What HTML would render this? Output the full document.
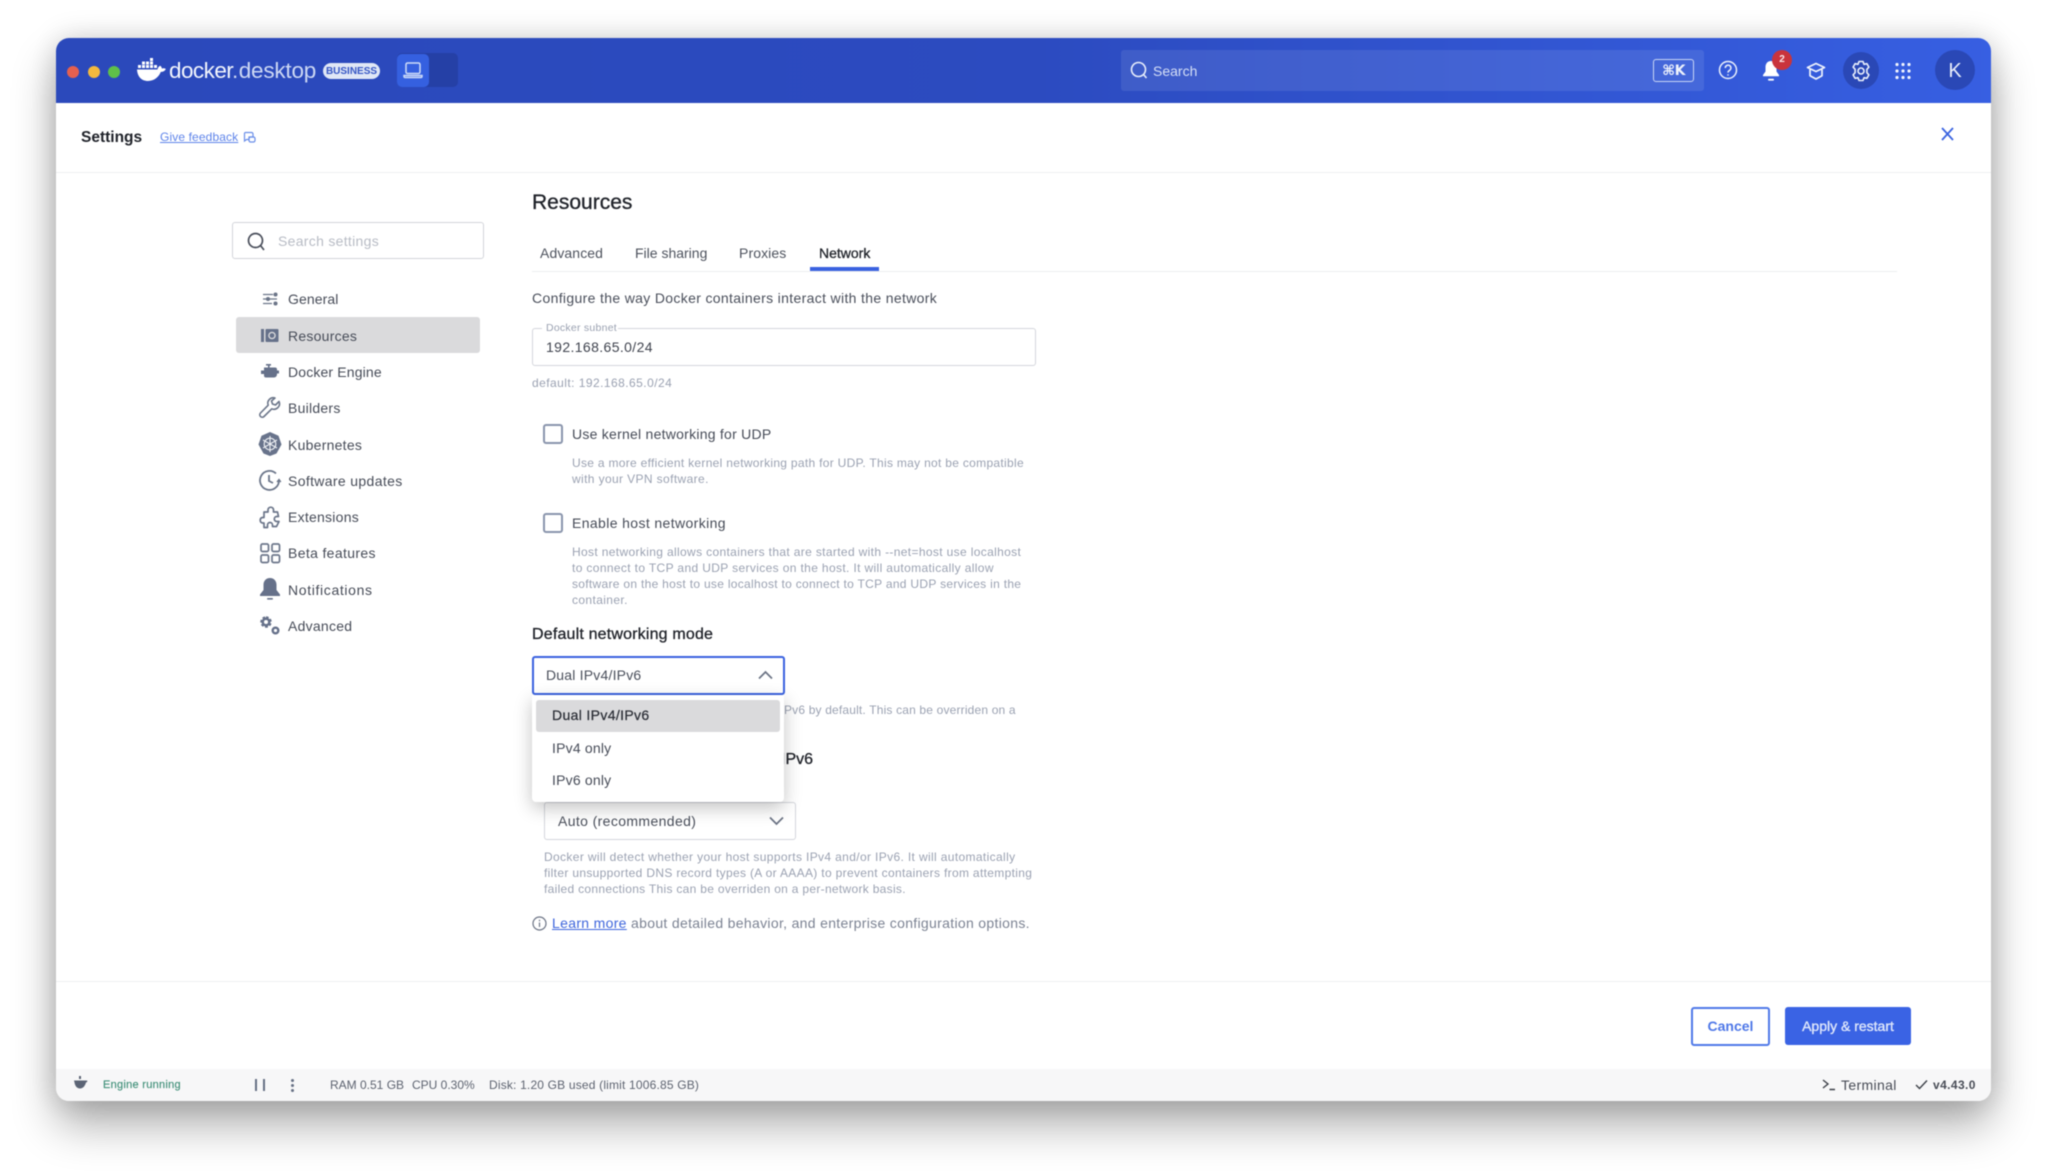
<!DOCTYPE html>
<html lang="en"><head><meta charset="utf-8"><title>Docker Desktop Settings</title>
<style>
html,body{margin:0;padding:0;width:2048px;height:1176px;background:#fff;overflow:hidden}
body{font-family:"Liberation Sans",sans-serif;color:#3c4250}
#win{position:absolute;left:56px;top:38px;width:1935px;height:1063px;background:#fff;border-radius:13px;box-shadow:0 24px 44px rgba(0,0,0,.32),0 0 30px rgba(0,0,0,.16)}
#root{position:absolute;left:0;top:0;width:2048px;height:1176px;filter:blur(.55px)}
.a{position:absolute}
.t{position:absolute;white-space:nowrap;line-height:20px;height:20px;margin-top:-10px}
.d{color:#9ba2b2;font-size:12px;letter-spacing:.38px;margin-top:-9.300px}
.n{font-size:14px;color:#474c58;left:288px;letter-spacing:.25px}
svg{position:absolute;overflow:visible}
</style></head><body>
<div id="root">
<div id="win"></div>
<div class="a" style="left:56px;top:38px;width:1935px;height:65px;border-radius:13px 13px 0 0;background:linear-gradient(90deg,#2b49bb 0%,#2c4bc0 50%,#375fe2 100%)"></div>

<div class="a" style="left:67px;top:66px;width:12px;height:12px;border-radius:50%;background:#e5604f"></div>
<div class="a" style="left:87.500px;top:66px;width:12px;height:12px;border-radius:50%;background:#f2b93e"></div>
<div class="a" style="left:108px;top:66px;width:12px;height:12px;border-radius:50%;background:#5fc04a"></div>

<svg style="left:137px;top:58px" width="29" height="23" viewBox="0 0 29 23" fill="#fff"><path d="M0 11.500h20.500c.3-1.800 1.300-3.200 2.800-3.700 1 .8 1.500 1.800 1.600 2.800 1.300-.5 2.700-.4 3.900.4-.9 2-2.800 2.900-5 2.900C21.800 19 17 23 11 23 4.500 23 .4 18.500 0 11.500z"/><rect x="1" y="7" width="3" height="3"/><rect x="5" y="7" width="3" height="3"/><rect x="9" y="7" width="3" height="3"/><rect x="13" y="7" width="3" height="3"/><rect x="17" y="7" width="3" height="3"/><rect x="5" y="3.500" width="3" height="3"/><rect x="9" y="3.500" width="3" height="3"/><rect x="13" y="3.500" width="3" height="3"/><rect x="13" y="0" width="3" height="3"/></svg>
<div class="t" style="left:169px;top:71px;font-size:22.500px;color:#f3f6fd;letter-spacing:-.55px;line-height:20px">docker<span style="color:#cfd9f5">.</span><span style="color:#cdd8f4;letter-spacing:-.2px;margin-left:1px">desktop</span></div>
<div class="a" style="left:323px;top:63px;width:57px;height:16px;border-radius:8px;background:#e0e7f6"></div>
<div class="t" style="left:323px;width:57px;text-align:center;top:71.500px;font-size:10px;font-weight:bold;color:#3556c4">BUSINESS</div>
<div class="a" style="left:397px;top:53px;width:61px;height:34px;border-radius:5px;background:#2540a6"></div>
<div class="a" style="left:397px;top:54px;width:32px;height:33px;border-radius:5px;background:#3560e0"></div>
<svg style="left:403px;top:61px" width="20" height="18" viewBox="0 0 20 18" fill="none" stroke="#cfdcf8" stroke-width="1.500"><rect x="3" y="2" width="14" height="10.500" rx="1.500"/><path d="M1 14.500h18v.8a1.200 1.200 0 0 1-1.200 1.200H2.200A1.200 1.200 0 0 1 1 15.300z"/></svg>

<div class="a" style="left:1121px;top:50px;width:583px;height:41px;border-radius:3px;background:rgba(255,255,255,.09)"></div>
<svg style="left:1130px;top:61px" width="18" height="19" viewBox="0 0 18 19" fill="none" stroke="#e8eefb" stroke-width="1.600"><circle cx="8.500" cy="8.500" r="7"/><path d="M13.500 13.500L16.500 17"/></svg>
<div class="t" style="left:1153px;top:70.500px;font-size:14px;color:#d5dff6">Search</div>
<div class="a" style="left:1653px;top:59px;width:39px;height:21px;border:1.500px solid #c9d6f5;border-radius:3px"></div>
<div class="t" style="left:1653px;width:41px;text-align:center;top:70.500px;font-size:14px;font-weight:bold;color:#eef2fc;font-family:'DejaVu Sans',sans-serif;letter-spacing:-.5px">⌘K</div>

<svg style="left:1718px;top:60px" width="20" height="20" viewBox="0 0 20 20" fill="none" stroke="#eaf0fc" stroke-width="1.500"><circle cx="10" cy="10" r="8.500"/><path d="M7.300 8a2.800 2.800 0 1 1 4.300 2.300c-1 .6-1.600 1.200-1.600 2.300"/><path d="M10 14.300v1.300"/></svg>
<svg style="left:1762px;top:60px" width="18" height="22" viewBox="0 0 18 22" fill="#fff"><path d="M9 1c3.500 0 5.500 2.800 5.500 6v4.500l2.500 3.500v1.300H1V15l2.500-3.500V7C3.500 3.800 5.500 1 9 1z"/><rect x="6" y="18.800" width="6" height="1.800" rx=".9"/></svg>
<div class="a" style="left:1772px;top:50px;width:20px;height:20px;border-radius:50%;background:#c9343c"></div>
<div class="t" style="left:1772px;width:20px;text-align:center;top:60px;font-size:10px;font-weight:bold;color:#fbe9ea">2</div>
<svg style="left:1806px;top:61px" width="20" height="20" viewBox="0 0 20 20" fill="none" stroke="#f0f4fd" stroke-width="1.700" stroke-linejoin="round"><path d="M1.500 6.500L10 2.500l8.500 4-8.500 4z"/><path d="M4 8.500v6.200L10 18l6-3.300V8.500"/></svg>
<div class="a" style="left:1843px;top:52px;width:36px;height:37px;border-radius:50%;background:#2a48b6"></div>
<svg style="left:1851px;top:60px" width="20" height="22" viewBox="0 0 20 22" fill="none" stroke="#eaf0fc" stroke-width="1.600" stroke-linejoin="round"><circle cx="10" cy="11" r="3"/><path d="M8 1.500h4l1 2.800 2.900-.6 2 3.400-2 2.200v3.400l2 2.200-2 3.400-2.900-.6-1 2.800H8l-1-2.800-2.900.6-2-3.400 2-2.200V9.300l-2-2.200 2-3.400 2.900.6z"/></svg>
<svg style="left:1895px;top:62px" width="16" height="18" viewBox="0 0 16 18" fill="#f1f4fd"><circle cx="2" cy="2.500" r="1.600"/><circle cx="8" cy="2.500" r="1.600"/><circle cx="14" cy="2.500" r="1.600"/><circle cx="2" cy="9" r="1.600"/><circle cx="8" cy="9" r="1.600"/><circle cx="14" cy="9" r="1.600"/><circle cx="2" cy="15.500" r="1.600"/><circle cx="8" cy="15.500" r="1.600"/><circle cx="14" cy="15.500" r="1.600"/></svg>
<div class="a" style="left:1935px;top:50px;width:40px;height:40px;border-radius:50%;background:#2a48b6"></div>
<div class="t" style="left:1935px;width:40px;text-align:center;top:70.500px;font-size:20px;color:#e9eefb">K</div>

<div class="t" style="left:81px;top:137.500px;font-size:15.500px;font-weight:bold;color:#1f2229">Settings</div>
<div class="t" style="left:160px;top:137px;font-size:12px;color:#5e84ea;text-decoration:underline;letter-spacing:.12px">Give feedback</div>
<svg style="left:243px;top:131px" width="13" height="13" viewBox="0 0 13 13" fill="none" stroke="#6a8ee9" stroke-width="1.200"><path d="M2.500 1.500h6a1.500 1.500 0 0 1 1.500 1.500v3H6v2.500H3.500L1.500 10V2.500a1 1 0 0 1 1-1z"/><rect x="6" y="6" width="6" height="5" rx="1.500"/></svg>
<svg style="left:1941px;top:127px" width="13" height="14" viewBox="0 0 13 14" fill="none" stroke="#3a63e0" stroke-width="1.800"><path d="M1 1l11 12M12 1L1 13"/></svg>
<div class="a" style="left:56px;top:172px;width:1935px;height:1px;background:#eeeff1"></div>

<div class="a" style="left:232px;top:222px;width:250px;height:35px;border:1px solid #d3d5da;border-radius:3px"></div>
<svg style="left:247px;top:232px" width="19" height="20" viewBox="0 0 19 20" fill="none" stroke="#4a4f5b" stroke-width="1.700"><circle cx="8.500" cy="8.500" r="7"/><path d="M13.500 13.500L17 18"/></svg>
<div class="t" style="left:278px;top:241px;font-size:14px;color:#b8bcc5;letter-spacing:.3px">Search settings</div>

<div class="a" style="left:236px;top:317px;width:244px;height:36px;border-radius:3px;background:#dadadc"></div>

<svg style="left:262px;top:292px" width="16" height="14" viewBox="0 0 16 14" fill="none" stroke="#6b7588" stroke-width="1.300"><path d="M1 2.500h10M1 7h3M8 7h7M1 11.500h9"/><circle cx="13.500" cy="2.500" r="1.400" fill="#6b7588"/><circle cx="6" cy="7" r="1.400" fill="#6b7588"/><circle cx="13.500" cy="11.500" r="1.400" fill="#6b7588"/></svg>
<div class="t n" style="top:299px;letter-spacing:.1px">General</div>
<svg style="left:261px;top:328px" width="18" height="15" viewBox="0 0 18 15"><rect x="0" y="1" width="3" height="13" fill="#66718a"/><rect x="4.500" y="1" width="13" height="13" rx="1" fill="#66718a"/><circle cx="11" cy="7.500" r="3.800" fill="#dadadc"/><circle cx="11" cy="7.500" r="2.400" fill="#66718a"/></svg>
<div class="t n" style="top:335.500px">Resources</div>
<svg style="left:260px;top:364px" width="20" height="15" viewBox="0 0 20 15" fill="#66718a"><rect x="6" y="0" width="5" height="1.600"/><rect x="8" y="1" width="1.600" height="3"/><path d="M4 3.500h11a2 2 0 0 1 2 2v1h2v3h-2v1a3 3 0 0 1-3 3H6a2 2 0 0 1-2-2V10H1V6.500h3z"/></svg>
<div class="t n" style="top:372px;letter-spacing:.15px">Docker Engine</div>
<svg style="left:259px;top:397px" width="22" height="22" viewBox="0 0 22 22" fill="none" stroke="#6c768a" stroke-width="1.600" stroke-linejoin="round"><path d="M20 4.500l-3.500 3.500-3-1-1-3L16 1a5.500 5.500 0 0 0-6.800 7.200L1.500 16a2.500 2.500 0 0 0 0 3.500 2.500 2.500 0 0 0 3.500 0l7.800-7.700A5.500 5.500 0 0 0 20 4.500z"/></svg>
<div class="t n" style="top:408px">Builders</div>
<svg style="left:258px;top:432px" width="24" height="24" viewBox="0 0 24 24"><path fill="#68738b" d="M12 0l8.500 3.800 3 8.700-5 9-6.500 2.500-6.500-2.500-5-9 3-8.700z"/><g fill="none" stroke="#eef0f4" stroke-width="1.100"><circle cx="12" cy="12" r="5.800"/><path d="M12 4v16M5 8l14 8M19 8L5 16"/></g></svg>
<div class="t n" style="top:444.500px">Kubernetes</div>
<svg style="left:258px;top:469px" width="23" height="23" viewBox="0 0 23 23" fill="none" stroke="#6c768a" stroke-width="1.800"><path d="M21 11.500a9.500 9.500 0 1 1-3-7"/><path d="M11 6v6l4 2"/><path d="M19 13l2-2.500 1.800 2.500" stroke-width="1.400"/></svg>
<div class="t n" style="top:481px;letter-spacing:.35px">Software updates</div>
<svg style="left:259px;top:506px" width="23" height="23" viewBox="0 0 23 23" fill="none" stroke="#6c768a" stroke-width="1.700" stroke-linejoin="round"><path d="M9 4.500a2.800 2.800 0 1 1 5.500 0v1.500h4l1 4.500h-1.700a2.500 2.500 0 1 0 0 5H20l-2.500 5h-4v-1.500a2.500 2.500 0 1 0-5 0V21.500H5V17H3.500a2.800 2.800 0 0 1 0-5.500H5V6h4z"/></svg>
<div class="t n" style="top:517px">Extensions</div>
<svg style="left:260px;top:543px" width="21" height="21" viewBox="0 0 21 21" fill="none" stroke="#6c768a" stroke-width="1.700"><rect x="1" y="1" width="7.500" height="7.500" rx="1.500"/><rect x="12" y="1" width="7.500" height="7.500" rx="1.500"/><rect x="1" y="12" width="7.500" height="7.500" rx="1.500"/><rect x="12" y="12" width="7.500" height="7.500" rx="1.500"/></svg>
<div class="t n" style="top:553px;letter-spacing:.35px">Beta features</div>
<svg style="left:259px;top:578px" width="22" height="23" viewBox="0 0 22 23" fill="#66718a"><path d="M11 0c4 0 6.500 3 6.500 6.800v5.200L21 16.500V18H1v-1.500L4.500 12V6.800C4.500 3 7 0 11 0z"/><rect x="8" y="20" width="6" height="1.600" rx=".8"/></svg>
<div class="t n" style="top:589.500px;letter-spacing:.65px">Notifications</div>
<svg style="left:259px;top:615px" width="22" height="21" viewBox="0 0 22 21"><path fill="#66718a" stroke="#66718a" stroke-width="2.500" stroke-dasharray="2.500 1.600" d="M7 2.500a4.500 4.500 0 1 1-.01 0z"/><circle cx="7" cy="7" r="2" fill="#fff"/><circle cx="16.500" cy="15.500" r="2.800" fill="none" stroke="#66718a" stroke-width="2.400"/></svg>
<div class="t n" style="top:626px">Advanced</div>

<div class="t" style="left:532px;top:203px;font-size:21px;color:#1f2229;-webkit-text-stroke:.3px #1f2229">Resources</div>
<div class="t" style="left:540px;top:253px;font-size:14px;color:#4e535e;letter-spacing:.1px">Advanced</div>
<div class="t" style="left:635px;top:253px;font-size:14px;color:#4e535e">File sharing</div>
<div class="t" style="left:739px;top:253px;font-size:14px;color:#4e535e;letter-spacing:.1px">Proxies</div>
<div class="t" style="left:819px;top:253px;font-size:14px;color:#23262d;-webkit-text-stroke:.3px #23262d">Network</div>
<div class="a" style="left:532px;top:271px;width:1365px;height:1px;background:#edeef0"></div>
<div class="a" style="left:810px;top:267px;width:69px;height:4px;background:#3a62e0"></div>

<div class="t" style="left:532px;top:298px;font-size:14px;color:#4a4f5b;letter-spacing:.34px">Configure the way Docker containers interact with the network</div>
<div class="a" style="left:532px;top:328px;width:502px;height:36px;border:1px solid #d4d6dc;border-radius:3px"></div>
<div class="a" style="left:542px;top:324px;width:76px;height:8px;background:#fff"></div>
<div class="t" style="left:546px;top:327.500px;font-size:10.500px;color:#9aa1b1;letter-spacing:.25px">Docker subnet</div>
<div class="t" style="left:546px;top:347px;font-size:14px;color:#3f434e;letter-spacing:.38px">192.168.65.0/24</div>
<div class="t d" style="left:532px;top:383px;letter-spacing:.45px;margin-top:-10px">default: 192.168.65.0/24</div>

<div class="a" style="left:542.500px;top:424px;width:16px;height:16px;border:2px solid #8a95ac;border-radius:3px"></div>
<div class="t" style="left:572px;top:434.300px;font-size:14px;color:#474c58;letter-spacing:.25px">Use kernel networking for UDP</div>
<div class="t d" style="left:572px;top:462px;letter-spacing:.3px">Use a more efficient kernel networking path for UDP. This may not be compatible</div>
<div class="t d" style="left:572px;top:478px">with your VPN software.</div>
<div class="a" style="left:542.500px;top:513px;width:16px;height:16px;border:2px solid #8a95ac;border-radius:3px"></div>
<div class="t" style="left:572px;top:523px;font-size:14px;color:#474c58;letter-spacing:.38px">Enable host networking</div>
<div class="t d" style="left:572px;top:551px;letter-spacing:.35px">Host networking allows containers that are started with --net=host use localhost</div>
<div class="t d" style="left:572px;top:567px;letter-spacing:.36px">to connect to TCP and UDP services on the host. It will automatically allow</div>
<div class="t d" style="left:572px;top:583px;letter-spacing:.3px">software on the host to use localhost to connect to TCP and UDP services in the</div>
<div class="t d" style="left:572px;top:599px">container.</div>

<div class="t" style="left:532px;top:635px;font-size:16px;color:#1f2229;-webkit-text-stroke:.3px #1f2229;letter-spacing:.18px">Default networking mode</div>
<div class="a" style="left:532px;top:656px;width:249px;height:35px;border:2px solid #3a62e0;border-radius:3px"></div>
<div class="t" style="left:546px;top:675px;font-size:14px;color:#4a4f5b;letter-spacing:.2px">Dual IPv4/IPv6</div>
<svg style="left:757.500px;top:670px" width="15" height="10" viewBox="0 0 15 10" fill="none" stroke="#6c7485" stroke-width="1.700"><path d="M1 8.500l6.500-6.500L14 8.500"/></svg>

<div class="t d" style="left:784px;top:709px;letter-spacing:.17px">Pv6 by default. This can be overriden on a</div>
<div class="t" style="left:781px;top:760px;font-size:16px;color:#1f2229;-webkit-text-stroke:.3px #1f2229">IPv6</div>

<div class="a" style="left:544px;top:802px;width:250px;height:36px;border:1px solid #d4d6dc;border-radius:3px"></div>
<div class="t" style="left:558px;top:821px;font-size:14px;color:#4a4f5b;letter-spacing:.38px">Auto (recommended)</div>
<svg style="left:769px;top:816px" width="15" height="10" viewBox="0 0 15 10" fill="none" stroke="#6c7485" stroke-width="1.700"><path d="M1 1.500L7.500 8 14 1.500"/></svg>

<div class="a" style="left:532px;top:695px;width:252px;height:107px;background:#fff;border-radius:0 0 4px 4px;box-shadow:0 6px 18px rgba(0,0,0,.24)"></div>
<div class="a" style="left:536px;top:700px;width:244px;height:32px;border-radius:3px;background:#dadadc"></div>
<div class="t" style="left:552px;top:715px;font-size:14px;color:#2b2e36;-webkit-text-stroke:.25px #2b2e36;letter-spacing:.35px">Dual IPv4/IPv6</div>
<div class="t" style="left:552px;top:747.500px;font-size:14px;color:#474c58;letter-spacing:.2px">IPv4 only</div>
<div class="t" style="left:552px;top:780px;font-size:14px;color:#474c58;letter-spacing:.2px">IPv6 only</div>

<div class="t d" style="left:544px;top:856px;letter-spacing:.36px">Docker will detect whether your host supports IPv4 and/or IPv6. It will automatically</div>
<div class="t d" style="left:544px;top:872px;letter-spacing:.33px">filter unsupported DNS record types (A or AAAA) to prevent containers from attempting</div>
<div class="t d" style="left:544px;top:888px;letter-spacing:.3px">failed connections This can be overriden on a per-network basis.</div>

<svg style="left:532px;top:916px" width="15" height="15" viewBox="0 0 15 15" fill="none" stroke="#6c7485" stroke-width="1.200"><circle cx="7.500" cy="7.500" r="6.500"/><path d="M7.500 6.500V11M7.500 3.800v1.400"/></svg>
<div class="t" style="left:552px;top:923px;font-size:14px;color:#7c8393;letter-spacing:.32px"><span style="color:#3f66dc;text-decoration:underline">Learn more</span> about detailed behavior, and enterprise configuration options.</div>

<div class="a" style="left:56px;top:981px;width:1935px;height:1px;background:#eeeff1"></div>
<div class="a" style="left:1691px;top:1006.500px;width:75px;height:35.500px;border:2px solid #5079e8;border-radius:3px"></div>
<div class="t" style="left:1691px;width:79px;text-align:center;top:1025.500px;font-size:14px;font-weight:bold;color:#4f78e8">Cancel</div>
<div class="a" style="left:1785px;top:1006.500px;width:126px;height:38.500px;border-radius:3px;background:#3a63e4"></div>
<div class="t" style="left:1785px;width:126px;text-align:center;top:1025.500px;font-size:14px;color:#dfe7fb;-webkit-text-stroke:.35px #dfe7fb">Apply &amp; restart</div>

<div class="a" style="left:56px;top:1069px;width:1935px;height:32px;border-radius:0 0 13px 13px;background:#f7f7f8"></div>
<svg style="left:73px;top:1076px" width="15" height="13" viewBox="0 0 15 13" fill="#5b6475"><rect x="6" y="0" width="2" height="3"/><path d="M1 4.500h13a1 1 0 0 1 0 1.500l-1 .5C12 10 10 12.500 7 12.500S2 10 1.500 6.500z"/></svg>
<div class="t" style="left:103px;top:1085px;font-size:11px;color:#3f8f78;-webkit-text-stroke:.15px #3f8f78;letter-spacing:.28px">Engine running</div>
<div class="a" style="left:255px;top:1079px;width:2px;height:12px;background:#667084"></div>
<div class="a" style="left:263px;top:1079px;width:2px;height:12px;background:#667084"></div>
<div class="a" style="left:291px;top:1079px;width:3px;height:3px;border-radius:50%;background:#667084"></div>
<div class="a" style="left:291px;top:1084px;width:3px;height:3px;border-radius:50%;background:#667084"></div>
<div class="a" style="left:291px;top:1089px;width:3px;height:3px;border-radius:50%;background:#667084"></div>
<div class="t" style="left:330px;top:1085px;font-size:12px;color:#5d6370">RAM 0.51 GB</div>
<div class="t" style="left:412px;top:1085px;font-size:12px;color:#5d6370">CPU 0.30%</div>
<div class="t" style="left:489px;top:1085px;font-size:12px;color:#5d6370;letter-spacing:.18px">Disk: 1.20 GB used (limit 1006.85 GB)</div>
<svg style="left:1822px;top:1079px" width="13" height="12" viewBox="0 0 13 12" fill="none" stroke="#3c4048" stroke-width="1.400"><path d="M1 1l5 4-5 4M7.500 10.500H13"/></svg>
<div class="t" style="left:1841px;top:1085px;font-size:14px;color:#494d57;letter-spacing:.35px">Terminal</div>
<svg style="left:1915px;top:1079px" width="13" height="11" viewBox="0 0 13 11" fill="none" stroke="#3c4048" stroke-width="1.400"><path d="M1 6l3.500 3.500L12 1.500"/></svg>
<div class="t" style="left:1933px;top:1085px;font-size:12px;font-weight:bold;color:#494d57;letter-spacing:.4px">v4.43.0</div>
</div>
</body></html>
